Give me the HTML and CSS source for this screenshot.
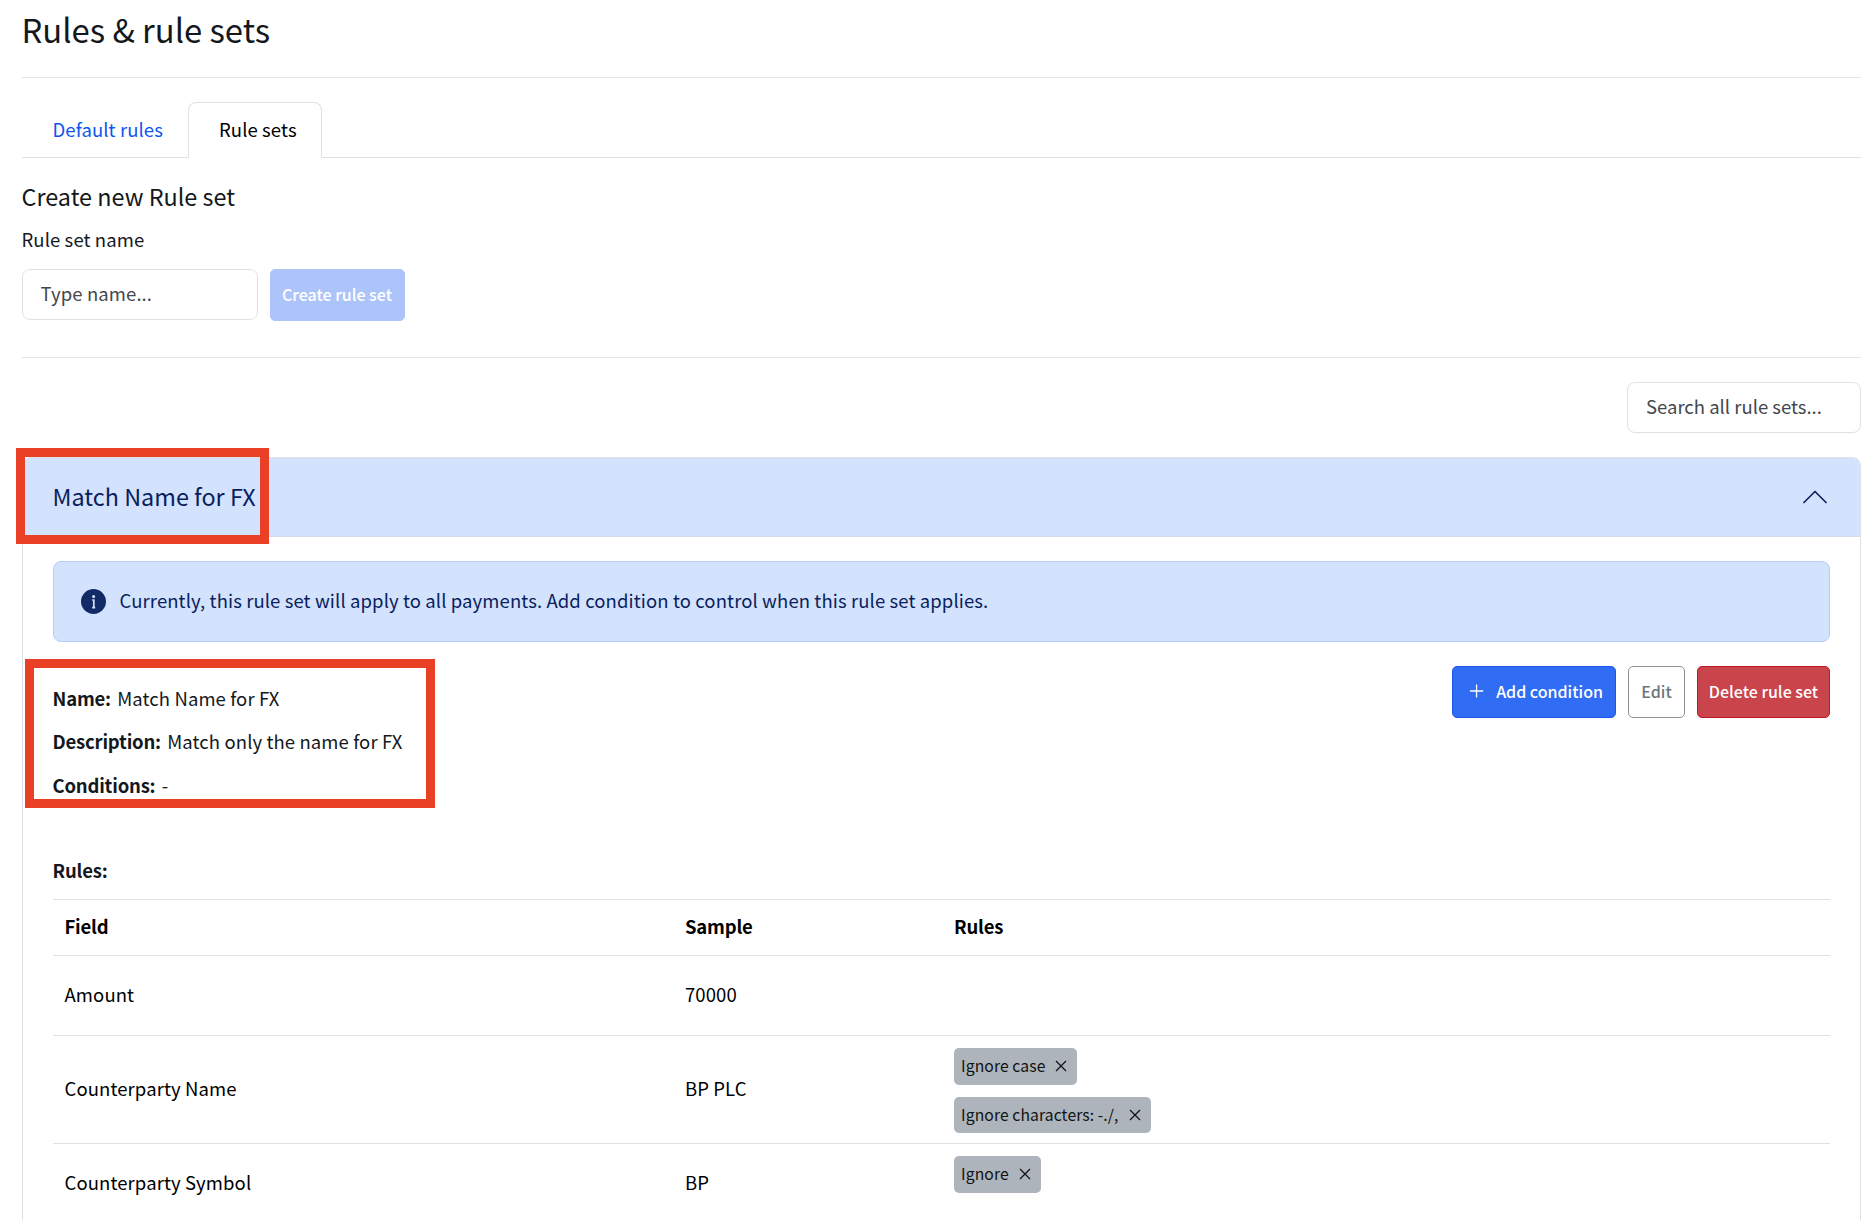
FILE: index.html
```
<!DOCTYPE html>
<html lang="en">
<head>
    <meta charset="UTF-8">
    <meta name="viewport" content="width=device-width, initial-scale=1.0">
    <title>Rules &amp; rule sets</title>
    <link rel="stylesheet" href="styles.css">
</head>
<body>
    <div class="container">
        <h1>Rules &amp; rule sets</h1>
        <div class="tabs">
            <a class="tab">Default rules</a>
            <a class="tab active">Rule sets</a>
        </div>

        <form class="create-form">
            <h2>Create new Rule set</h2>
            <label for="ruleSetName">Rule set name</label>
            <div class="create-row">
                <input type="text" id="ruleSetName" placeholder="Type name...">
                <button type="button" class="btn btn-primary" disabled>Create rule set</button>
            </div>
        </form>

        <div class="search">
            <input type="text" placeholder="Search all rule sets...">
        </div>

        <div class="accordion">
            <div class="accordion-header">
                <span>Match Name for FX</span>
                <svg class="chevron" width="26" height="26" viewBox="0 0 16 16" fill="none" stroke="#0a1e5e" stroke-linecap="round" stroke-linejoin="round"><path d="M1.2 11.4 8 4.6l6.8 6.8"/></svg>
                <div class="mark mark-title"></div>
            </div>
            <div class="accordion-body">
                <div class="alert">
                    <svg width="25" height="25" viewBox="0 0 25 25"><circle cx="12.5" cy="12.5" r="12.5" fill="#122b66"/><circle cx="12.6" cy="7.4" r="1.5" fill="#d3e2fd"/><path d="M11.2 11h1.6v7.6M11.2 18.6h3" fill="none" stroke="#d3e2fd" stroke-width="1.7"/></svg>
                    <span>Currently, this rule set will apply to all payments. Add condition to control when this rule set applies.</span>
                </div>

                <div class="details">
                    <div class="info">
                        <p><b>Name:</b> Match Name for FX</p>
                        <p><b>Description:</b> Match only the name for FX</p>
                        <p><b>Conditions:</b> -</p>
                        <div class="mark mark-info"></div>
                    </div>
                    <div class="actions">
                        <button class="btn btn-primary btn-add"><svg width="16" height="16" viewBox="0 0 16 16" stroke="#fff" stroke-width="1.4"><path d="M8 1v14M1 8h14"/></svg>Add condition</button>
                        <button class="btn btn-outline">Edit</button>
                        <button class="btn btn-danger">Delete rule set</button>
                    </div>
                </div>

                <h3>Rules:</h3>
                <table>
                    <thead>
                        <tr>
                            <th class="col-field">Field</th>
                            <th class="col-sample">Sample</th>
                            <th>Rules</th>
                        </tr>
                    </thead>
                    <tbody>
                        <tr>
                            <td>Amount</td>
                            <td>70000</td>
                            <td></td>
                        </tr>
                        <tr class="tall">
                            <td>Counterparty Name</td>
                            <td>BP PLC</td>
                            <td class="rules">
                                <div class="chips">
                                    <span class="chip">Ignore case <svg width="12" height="12" viewBox="0 0 12 12" stroke="#111" stroke-width="1.2"><path d="m1 1 10 10M11 1 1 11"/></svg></span>
                                    <span class="chip">Ignore characters: -./, <svg width="12" height="12" viewBox="0 0 12 12" stroke="#111" stroke-width="1.2"><path d="m1 1 10 10M11 1 1 11"/></svg></span>
                                </div>
                            </td>
                        </tr>
                        <tr>
                            <td>Counterparty Symbol</td>
                            <td>BP</td>
                            <td class="rules">
                                <div class="chips">
                                    <span class="chip">Ignore <svg width="12" height="12" viewBox="0 0 12 12" stroke="#111" stroke-width="1.2"><path d="m1 1 10 10M11 1 1 11"/></svg></span>
                                </div>
                            </td>
                        </tr>
                    </tbody>
                </table>
            </div>
        </div>
    </div>
</body>
</html>
```

FILE: styles.css
```
* {
    box-sizing: border-box;
}
body {
    font-family: "Noto Sans CJK SC", "Open Sans", sans-serif;
    font-size: 18.5px;
    letter-spacing: 0.1px;
    line-height: 28px;
    color: #14181c;
    background: #fff;
    margin: 0;
    height: 1220px;
    overflow: hidden;
}
.container {
    padding: 0 13px 0 21.5px;
}
h1, h2, h3, p {
    margin: 0;
    font-weight: 400;
}
h1 {
    font-size: 32.8px;
    letter-spacing: 0;
    line-height: 44px;
    height: 78px;
    padding-top: 7px;
    border-bottom: 1px solid #e2e4e8;
}
.tabs {
    display: flex;
    height: 80px;
    padding-top: 24px;
    border-bottom: 1px solid #dee2e6;
}
.tab {
    height: 56px;
    padding: 12px 24px 0 30px;
    border: 1px solid transparent;
    color: #0d55f0;
}
.tab.active {
    color: #000;
    background: #fff;
    border-color: #dee2e6;
    border-bottom: none;
    border-radius: 8px 8px 0 0;
}
.create-form {
    height: 200px;
    padding-top: 20px;
    border-bottom: 1px solid #e2e4e8;
}
h2 {
    font-size: 23.4px;
    letter-spacing: 0;
    line-height: 36px;
}
label {
    display: block;
    margin-top: 11px;
}
.create-row {
    display: flex;
    gap: 12px;
    margin-top: 16px;
}
input {
    width: 236px;
    height: 51px;
    padding: 0 18px 3px;
    border: 1px solid #dee2e6;
    border-radius: 8px;
    font: inherit;
    letter-spacing: inherit;
}
input::placeholder {
    color: #43484d;
    opacity: 1;
}
.btn {
    display: flex;
    align-items: center;
    justify-content: center;
    height: 52px;
    padding: 0 12px 3px;
    border: 1px solid;
    border-radius: 5px;
    font-family: inherit;
    font-size: 16px;
    font-weight: 500;
    white-space: nowrap;
}
.btn-primary {
    color: #fff;
    background: #316cf4;
    border-color: #1c57e8;
}
.btn-primary:disabled {
    width: 135px;
    background: #adc4fb;
    border-color: #adc4fb;
}
.btn-add {
    width: 164px;
    gap: 12px;
    padding-left: 16px;
}
.btn-outline {
    width: 57px;
    color: #6c757d;
    background: #fff;
    border-color: #8b9298;
}
.btn-danger {
    width: 133px;
    color: #fff;
    background: #ca444b;
    border-color: #be1822;
}
.search {
    display: flex;
    justify-content: flex-end;
    padding: 24px 0;
}
.search input {
    width: 234px;
    letter-spacing: 0;
}
.accordion {
    border: 1px solid #dee2e6;
    border-radius: 8px 8px 0 0;
}
.accordion-header {
    position: relative;
    display: flex;
    align-items: center;
    justify-content: space-between;
    height: 79px;
    padding: 0 32px 1px 30px;
    border-bottom: 1px solid #d3dbe8;
    border-radius: 7px 7px 0 0;
    background: #d3e2fd;
    color: #0a1e5e;
    font-size: 23.4px;
    letter-spacing: 0;
}
.accordion-header span {
    padding-bottom: 2px;
}
.accordion-body {
    padding: 24px 30px 0;
}
.alert {
    display: flex;
    align-items: center;
    gap: 14px;
    height: 81px;
    padding-left: 27px;
    border: 1px solid #b3ccfa;
    border-radius: 8px;
    background: #d3e2fd;
    color: #0a1e5e;
}
.alert span {
    padding-bottom: 4px;
}
.details {
    display: flex;
    justify-content: space-between;
    height: 190px;
    padding-top: 24px;
}
.info {
    position: relative;
    padding-top: 18px;
}
.info p {
    margin-bottom: 15.4px;
}
.actions {
    display: flex;
    gap: 12px;
}
b, h3, th {
    font-weight: 600;
    letter-spacing: -0.2px;
}
b {
    margin-right: 2px;
}
h3 {
    font-size: 18.5px;
    padding: 24px 0 15px;
}
table {
    width: 100%;
    border-collapse: collapse;
    table-layout: fixed;
    color: #000;
}
tr {
    height: 80px;
    border-top: 1px solid #dee2e6;
}
thead tr {
    height: 56px;
}
tr.tall {
    height: 108px;
}
th, td {
    padding: 0 12px 3px;
    text-align: left;
}
.col-field {
    width: 620.5px;
}
.col-sample {
    width: 269px;
}
.rules {
    padding-top: 12px;
    vertical-align: top;
}
.chips {
    display: flex;
    flex-direction: column;
    align-items: flex-start;
    gap: 12px;
}
.chip {
    display: flex;
    align-items: center;
    gap: 10px;
    height: 36.5px;
    padding: 0 10px 0 7px;
    border-radius: 5px;
    background: #adb4bc;
    color: #111;
    font-size: 15.7px;
}
/* callout frames */
.mark {
    position: absolute;
    border: 9px solid #ea4025;
}
.mark-title {
    left: -6.5px;
    top: -10px;
    width: 253px;
    height: 96px;
}
.mark-info {
    left: -27.5px;
    top: -7px;
    width: 410px;
    height: 149px;
}
```
